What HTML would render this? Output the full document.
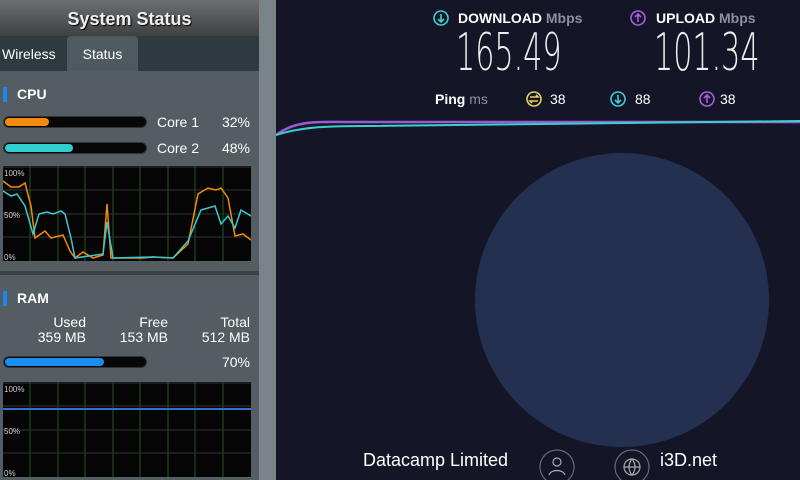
<!DOCTYPE html><html><head><style>
body{margin:0;width:800px;height:480px;overflow:hidden;background:#141627;font-family:"Liberation Sans",sans-serif;position:relative}
.l{position:absolute;left:0;top:0;width:259px;height:480px;background:#535d62;color:#fff}
.div{position:absolute;left:259px;top:0;width:17px;height:480px;background:#7a8388}
.hd{position:absolute;left:0;top:0;width:259px;height:36px;background:linear-gradient(#6c6e70,#3e4042);text-align:center;font-weight:bold;font-size:18px;line-height:38px;text-shadow:1px 1px 1px #000;color:#eee}
.tabs{position:absolute;top:36px;left:0;width:259px;height:35px;background:#2f3a3e;font-size:14px}
.a{position:absolute;top:0;line-height:36px}
.st{left:67px;width:71px;height:35px;background:#4f5a60;border-radius:4px 4px 0 0;text-align:center}
.t{position:absolute;font-size:14px}
.r{text-align:right;width:60px}
.bar{position:absolute;left:3px;width:142px;height:10px;background:#080808;border-radius:6px;border:1px solid #333}
.bar i{display:block;height:8px;margin:1px;border-radius:5px}
.sec{position:absolute;left:3px;width:4px;height:15px;background:#1a86f0}
.big{position:absolute;color:#eee;font-family:"DejaVu Sans ExtraLight","DejaVu Sans",sans-serif;font-weight:200;font-size:52px;line-height:52px;transform:scaleX(.58);transform-origin:left}
.w{position:absolute;color:#fff;font-size:14px;font-weight:bold}
</style></head><body>
<div class="l">
<div class="hd">System Status</div>
<div class="tabs"><span class="a" style="left:2px">Wireless</span><span class="a st">Status</span></div>
<div class="sec" style="top:87px"></div><div class="t" style="left:17px;top:86px;font-weight:bold;font-size:14px">CPU</div>
<div class="bar" style="top:116px"><i style="width:44px;background:#f28a0c"></i></div>
<div class="t" style="left:157px;top:114px">Core 1</div><div class="t r" style="left:190px;top:114px">32%</div>
<div class="bar" style="top:142px"><i style="width:68px;background:#2fcfcf"></i></div>
<div class="t" style="left:157px;top:140px">Core 2</div><div class="t r" style="left:190px;top:140px">48%</div>
<svg style="position:absolute;left:3px;top:166px" width="248" height="95"><rect width="248" height="95" fill="#050505"/>
<g stroke="#1f5a1a"><path d="M27 0V95M55 0V95M82 0V95M110 0V95M137 0V95M165 0V95M192 0V95M220 0V95"/></g>
<g stroke="#333"><path d="M0 1H248M0 24H248M0 48H248M0 71H248"/></g>
<text x="1" y="10" font-size="8" fill="#ccc">100%</text><text x="1" y="52" font-size="8" fill="#ccc">50%</text><text x="1" y="94" font-size="8" fill="#ccc">0%</text>
<polyline fill="none" stroke="#f28a0c" stroke-width="1.5" points="0,15 8,21 16,21 22,17 28,40 32,72 42,65 48,72 60,69 67,85 72,92 80,86 90,92 100,89 104,38 108,92 120,92 140,92 150,91 170,92 185,78 195,28 205,22 213,24 218,22 225,32 232,70 240,68 248,74"/>
<polyline fill="none" stroke="#3cc9cd" stroke-width="1.5" points="0,25 8,30 14,28 22,40 30,68 36,48 44,46 50,48 58,45 62,48 68,72 72,92 100,88 104,56 110,92 150,91 170,92 185,75 198,44 212,40 218,58 225,50 232,62 238,44 248,50"/>
</svg>
<div style="position:absolute;left:0;top:271px;width:259px;height:4px;background:#3a4246"></div>
<div class="sec" style="top:291px"></div><div class="t" style="left:17px;top:290px;font-weight:bold;font-size:14px">RAM</div>
<div class="t r" style="left:26px;top:314px">Used</div><div class="t r" style="left:26px;top:329px">359 MB</div>
<div class="t r" style="left:108px;top:314px">Free</div><div class="t r" style="left:108px;top:329px">153 MB</div>
<div class="t r" style="left:190px;top:314px">Total</div><div class="t r" style="left:190px;top:329px">512 MB</div>
<div class="bar" style="top:356px"><i style="width:99px;background:#1a8ef0"></i></div>
<div class="t r" style="left:190px;top:354px">70%</div>
<svg style="position:absolute;left:3px;top:382px" width="248" height="95"><rect width="248" height="95" fill="#050505"/>
<g stroke="#1f5a1a"><path d="M27 0V95M55 0V95M82 0V95M110 0V95M137 0V95M165 0V95M192 0V95M220 0V95"/></g>
<g stroke="#333"><path d="M0 1H248M0 24H248M0 48H248M0 71H248"/></g>
<path d="M0 27H248" stroke="#2f6fd0" stroke-width="2"/>
<text x="1" y="10" font-size="8" fill="#ccc">100%</text><text x="1" y="52" font-size="8" fill="#ccc">50%</text><text x="1" y="94" font-size="8" fill="#ccc">0%</text>
</svg>
</div>
<div class="div"></div>
<svg style="position:absolute;left:276px;top:0" width="524" height="480">
<path d="M0 135 C20 120 40 122 80 122 H524" fill="none" stroke="#9a5ad8" stroke-width="2.5"/>
<path d="M0 135 C25 127 50 126 90 126 L524 121" fill="none" stroke="#3ccfcf" stroke-width="2"/>
<circle cx="346" cy="300" r="147" fill="#243050"/>
<g fill="none" stroke-width="1.6">
<circle cx="165" cy="18" r="7" stroke="#3ccfcf"/><path d="M165 14v8M162 19l3 3 3-3" stroke="#3ccfcf"/>
<circle cx="362" cy="18" r="7" stroke="#a35fe0"/><path d="M362 22v-8M359 17l3-3 3 3" stroke="#a35fe0"/>
<circle cx="258" cy="99" r="7" stroke="#e5d25c"/><path d="M254 97h8l-2-2M262 101h-8l2 2" stroke="#e5d25c"/>
<circle cx="342" cy="99" r="7" stroke="#3ccfcf"/><path d="M342 95v8M339 100l3 3 3-3" stroke="#3ccfcf"/>
<circle cx="431" cy="99" r="7" stroke="#a35fe0"/><path d="M431 103v-8M428 98l3-3 3 3" stroke="#a35fe0"/>
<circle cx="281" cy="467" r="17" stroke="#666a78" stroke-width="1.2"/><circle cx="281" cy="462" r="4" stroke="#aaa" stroke-width="1.2"/><path d="M273 475c2-6 14-6 16 0" stroke="#aaa" stroke-width="1.2"/>
<circle cx="356" cy="467" r="17" stroke="#666a78" stroke-width="1.2"/><circle cx="356" cy="467" r="8" stroke="#aaa" stroke-width="1.2"/><path d="M348 467h16M356 459c-4 5-4 11 0 16c4-5 4-11 0-16" stroke="#aaa" stroke-width="1.2"/>
</g></svg>
<div class="w" style="left:458px;top:10px">DOWNLOAD <span style="color:#8a90a0">Mbps</span></div>
<div class="w" style="left:656px;top:10px">UPLOAD <span style="color:#8a90a0">Mbps</span></div>
<div class="big" style="left:456px;top:27px">165.49</div>
<div class="big" style="left:654px;top:27px">101.34</div>
<div class="w" style="left:435px;top:91px">Ping <span style="color:#8a90a0;font-weight:normal">ms</span></div>
<div class="w" style="left:550px;top:91px;font-weight:normal">38</div>
<div class="w" style="left:635px;top:91px;font-weight:normal">88</div>
<div class="w" style="left:720px;top:91px;font-weight:normal">38</div>
<div class="w" style="left:363px;top:450px;font-size:18px;font-weight:normal">Datacamp Limited</div>
<div class="w" style="left:660px;top:450px;font-size:18px;font-weight:normal">i3D.net</div>
</body></html>
